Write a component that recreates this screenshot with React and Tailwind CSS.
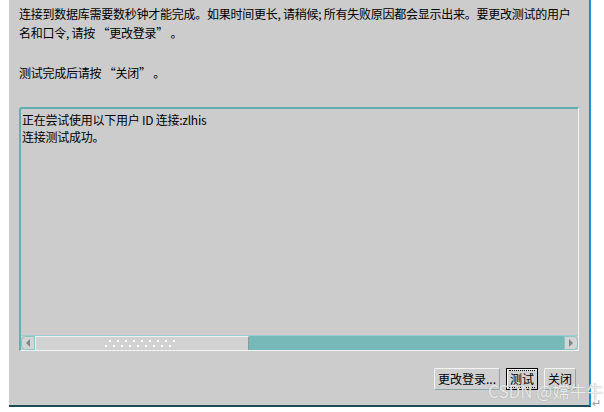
import React from 'react';

// Old-style "test connection" dialog page
function ArrowLeft() {
  return (
    <svg width="6" height="8" viewBox="0 0 6 8">
      <path d="M5 0L1 4l4 4z" fill="#7a8a8a" />
    </svg>
  );
}

function ArrowRight() {
  return (
    <svg width="6" height="8" viewBox="0 0 6 8">
      <path d="M1 0l4 4-4 4z" fill="#7a8a8a" />
    </svg>
  );
}

function Grip() {
  const dots = [];
  for (let i = 0; i < 9; i++) {
    dots.push(<rect key={'a' + i} x={4 + i * 8} y={0} width="2" height="2" fill="#ffffff" />);
    dots.push(<rect key={'b' + i} x={i * 8} y={5} width="2" height="2" fill="#ffffff" />);
  }
  return (
    <svg width="74" height="7" viewBox="0 0 74 7">
      {dots}
    </svg>
  );
}

function Button({ children, focused }) {
  return (
    <div
      className={
        focused
          ? 'h-[22px] px-[2px] flex items-center border border-black bg-[#d0d0d0] shadow-[inset_1px_1px_0_#ffffff]'
          : 'h-[22px] px-[3px] flex items-center bg-[#d0d0d0] border border-t-[#f4f4f4] border-l-[#f4f4f4] border-r-[#8aa8a8] border-b-[#8aa8a8] rounded-[2px]'
      }
    >
      <span
        className={
          focused
            ? 'px-[1px] leading-[16px] border-y border-dotted border-black'
            : 'leading-[16px]'
        }
      >
        {children}
      </span>
    </div>
  );
}

export default function App() {
  return (
    <div
      className="w-[604px] h-[412px] bg-white relative overflow-hidden text-[12px] text-black"
      style={{ fontFamily: '"Noto Sans CJK SC", "Liberation Sans", sans-serif' }}
    >
      <div className="ml-[9px] w-[582px] h-[407px] bg-[#cccccc] border-r-2 border-r-[#1a8fd0] border-b-2 border-b-[#1f4a5a] flex flex-col px-[10px] pt-[4px]">
        <p className="leading-[19px] tracking-[-0.25px]">
          连接到数据库需要数秒钟才能完成。如果时间更长, 请稍候; 所有失败原因都会显示出来。要更改测试的用户
          <br />
          名和口令, 请按 “更改登录” 。
        </p>
        <p className="mt-[21px] leading-[19px] tracking-[-0.25px]">测试完成后请按 “关闭” 。</p>

        {/* output box */}
        <div className="mt-[25px] h-[244px] flex flex-col border-t-2 border-l-2 border-t-[#62b0b0] border-l-[#62b0b0] border-r border-b border-r-[#f2f2f2] border-b-[#f2f2f2] rounded-tl-[3px]">
          <div className="flex-1 px-[1px] pt-[2px] leading-[17px] tracking-[-0.25px]">
            <div>正在尝试使用以下用户 ID 连接:zlhis</div>
            <div>连接测试成功。</div>
          </div>
          <div className="h-[15px] flex border-t border-t-[#9fd0d0]">
            <div className="w-[14px] flex items-center justify-center bg-[#d4d4d4] border border-[#8cc4c4] rounded-l-[5px]">
              <ArrowLeft />
            </div>
            <div className="w-[214px] flex items-center justify-center bg-[#d2d2d2] border-t border-l border-t-[#f0f0f0] border-l-[#f0f0f0] border-r border-r-[#8c9c9c]">
              <Grip />
            </div>
            <div className="flex-1 bg-[#77b9b8]"></div>
            <div className="w-[14px] flex items-center justify-center bg-[#d4d4d4] border border-[#8cc4c4] rounded-r-[4px]">
              <ArrowRight />
            </div>
          </div>
        </div>

        <div className="mt-[17px] flex justify-end gap-[6px] pr-[3px]">
          <Button>更改登录...</Button>
          <Button focused>测试</Button>
          <Button>关闭</Button>
        </div>
      </div>

      {/* watermark */}
      <div className="absolute left-[488px] top-[381px] text-[17px] leading-[20px] text-white/80 [text-shadow:0_0_1px_#8a8a8a]">
        CSDN @嫦牛牛
      </div>
      <div className="absolute left-[592px] top-[394px] text-[11px] text-[#9a9a9a]">↵</div>
    </div>
  );
}
